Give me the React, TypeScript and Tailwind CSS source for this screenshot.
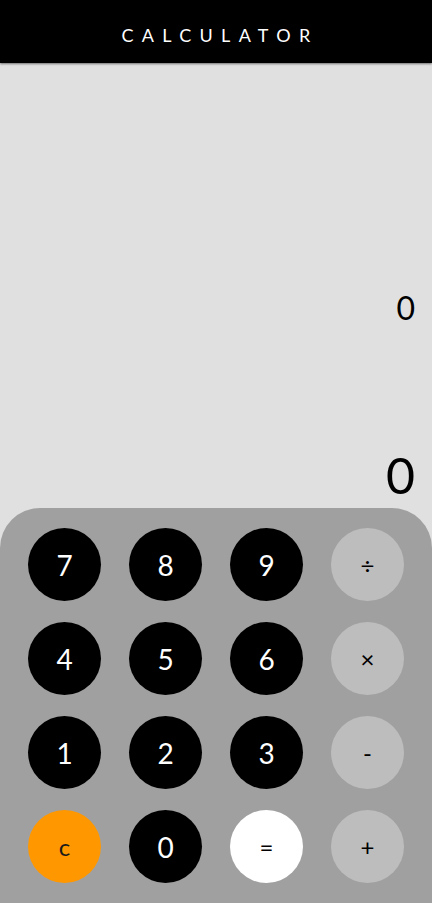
import React from "react";

type Key = { label: string; kind: "num" | "op" | "clear" | "eq" };

const keys: Key[] = [
  { label: "7", kind: "num" },
  { label: "8", kind: "num" },
  { label: "9", kind: "num" },
  { label: "÷", kind: "op" },
  { label: "4", kind: "num" },
  { label: "5", kind: "num" },
  { label: "6", kind: "num" },
  { label: "×", kind: "op" },
  { label: "1", kind: "num" },
  { label: "2", kind: "num" },
  { label: "3", kind: "num" },
  { label: "-", kind: "op" },
  { label: "c", kind: "clear" },
  { label: "0", kind: "num" },
  { label: "=", kind: "eq" },
  { label: "+", kind: "op" },
];

const keyStyles: Record<Key["kind"], string> = {
  num: "bg-black text-white text-[28px]",
  op: "bg-[#bdbdbd] text-black text-[24px]",
  clear: "bg-[#ff9800] text-[#1a1a1a] text-[24px]",
  eq: "bg-white text-black text-[24px]",
};

export default function App() {
  return (
    <div className="flex min-h-[903px] flex-col bg-[#e0e0e0] font-['Lato',_sans-serif]">
      {/* Header */}
      <header className="flex h-[63px] shrink-0 items-center justify-center bg-black pt-[7px] shadow-[0_1px_2px_rgba(0,0,0,0.5)]">
        <h1 className="pl-[8px] text-[18px] font-normal uppercase tracking-[8.3px] text-white">
          Calculator
        </h1>
      </header>

      {/* Display */}
      <div className="flex flex-1 flex-col items-end justify-end px-[17px] pb-2 text-black">
        <p className="mb-[126px] text-[32px] leading-none">0</p>
        <p className="text-[50px] leading-none">0</p>
      </div>

      {/* Keypad */}
      <div className="grid h-[395px] shrink-0 grid-cols-4 content-start gap-x-[28px] gap-y-[21px] rounded-t-[40px] bg-[#a0a0a0] px-[28px] pt-[20px]">
        {keys.map((k) => (
          <button
            key={k.label}
            type="button"
            className={`flex h-[73px] w-[73px] items-center justify-center rounded-full leading-none ${keyStyles[k.kind]}`}
          >
            {k.label}
          </button>
        ))}
      </div>
    </div>
  );
}
